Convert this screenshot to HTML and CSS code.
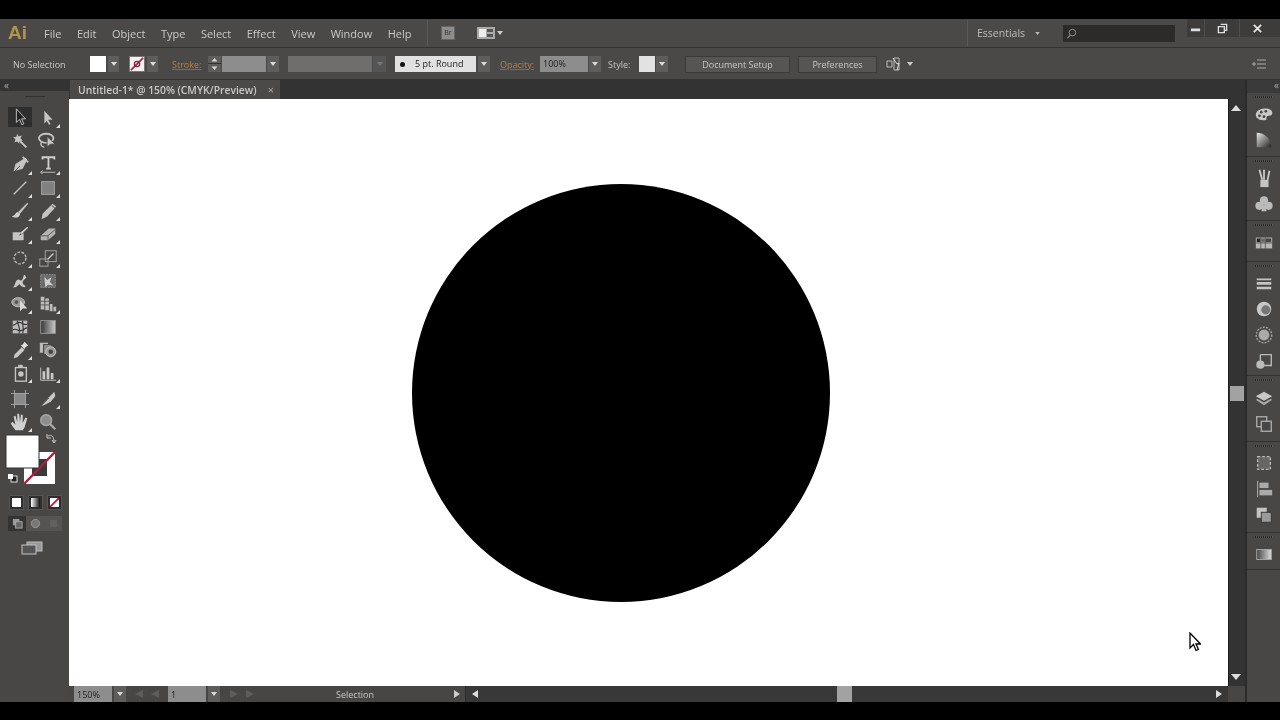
FILE: index.html
```html
<!DOCTYPE html>
<html lang="en">
<head>
<meta charset="utf-8">
<title>Adobe Illustrator</title>
<link rel="stylesheet" href="styles.css">
</head>
<body>
<div class="app">
  <header class="menubar">
    <div class="logo">Ai</div>
    <nav class="menu"><span>File</span><span>Edit</span><span>Object</span><span>Type</span><span>Select</span><span>Effect</span><span>View</span><span>Window</span><span>Help</span></nav>
    <div class="vsep"></div>
    <div class="br">Br</div>
    <svg class="arrange" viewBox="0 0 26 14"><rect x="0" y="1" width="18" height="12" fill="#aaa"/><rect x="2" y="3" width="7" height="8" fill="#eee"/><rect x="10" y="3" width="6" height="3" fill="#555"/><rect x="10" y="8" width="6" height="3" fill="#555"/><path d="M20 5h6l-3 4z" fill="#ccc"/></svg>
    <div class="menu-right">
      <div class="vsep"></div>
      <div class="workspace-name">Essentials</div>
      <svg class="tiny" viewBox="0 0 6 4"><path d="M0 0h6L3 4z" fill="#bbb"/></svg>
      <div class="search"><svg viewBox="0 0 12 12"><circle cx="7" cy="5" r="3.6" fill="none" stroke="#999" stroke-width="1"/><path d="M4.500 8 1.500 11" stroke="#999" stroke-width="1.200"/></svg></div>
      <div class="winbtns">
        <div class="winbtn min"><svg viewBox="0 0 12 12"><rect x="1" y="6" width="10" height="3" fill="#ddd"/></svg></div>
        <div class="winbtn"><svg viewBox="0 0 12 12"><path d="M4 1.500h6.500V8H8.500M1.500 4H8v6.500H1.500Z" fill="none" stroke="#ddd" stroke-width="1.500"/></svg></div>
        <div class="winbtn close"><svg viewBox="0 0 12 12"><path d="M2 2 10 10M10 2 2 10" stroke="#e4e4e4" stroke-width="2"/></svg></div>
      </div>
    </div>
  </header>

  <section class="controlbar">
    <div class="label no-sel">No Selection</div>
    <div class="swatch"></div><div class="dd"></div>
    <div class="swatch none m10"><svg viewBox="0 0 16 16"><path d="M1 15 15 1" stroke="#b0204a" stroke-width="2"/><circle cx="8" cy="8" r="3" fill="none" stroke="#8a2040" stroke-width="1.500"/></svg></div><div class="dd"></div>
    <div class="label link m14 w29">Stroke:</div>
    <svg class="spin m7" viewBox="0 0 13 16"><rect width="13" height="16" fill="#5e5d5b"/><path d="M0 7.500h13" stroke="#333"/><path d="M3.500 5.500 6.500 2l3 3.500zM3.500 10.500h6l-3 3.500z" fill="#d4d4d4"/></svg>
    <div class="field w44 m1"></div><div class="dd m1 w12"></div>
    <div class="field dim w84 m9"></div><div class="dd faded m1 w13"></div>
    <div class="field light w81 m9"><i class="dot"></i>5 pt. Round</div><div class="dd w12"></div>
    <div class="label link m10 w33">Opacity:</div>
    <div class="field w48 m7 txt">100%</div><div class="dd m1 w12"></div>
    <div class="label m7 w23">Style:</div>
    <div class="swatch soft m8"></div><div class="dd m1 w12"></div>
    <button class="btn w105 m17">Document Setup</button>
    <button class="btn w79 m8">Preferences</button>
    <svg class="ctl-ic" viewBox="0 0 27 14"><path d="M1 4h5v6H1zM8 1h5v12H8z" fill="none" stroke="#bbb"/><path d="M7 1l4 6 2-1-2 7" fill="none" stroke="#ddd"/><path d="M21 5h6l-3 4z" fill="#ccc"/></svg>
    <svg class="panel-menu" viewBox="0 0 14 10"><path d="M5 1h9M5 5h9M5 9h9M0 5h4M2 3v4" stroke="#aaa"/></svg>
  </section>

  <main class="workspace">
    <aside class="tools">
      <div class="collapse left">«</div>
      <div class="grip"></div>
      <div class="toolset first">
        <div class="tool active"><svg viewBox="0 0 22 22"><path d="M7 2v15l3.500-3.500 2.500 6 2.200-1-2.500-5.500H17Z" fill="#222" stroke="#c8c8c8"/></svg></div>
        <div class="tool more"><svg viewBox="0 0 22 22"><path d="M7 3v14l4-4 5 0Z" fill="#c4c4c4"/><path d="M10 13l3 5" stroke="#c4c4c4" stroke-width="2"/></svg></div>
        <div class="tool"><svg viewBox="0 0 22 22"><path d="M8 3l1.500 3L13 5l-1.500 3 2.500 2.500-3.500.5L10 14 8 11.500 5 12.500 6 9 3.500 7 7 6.500Z" fill="#c8c8c8"/><path d="M11 11l7 7" stroke="#c8c8c8" stroke-width="2"/></svg></div>
        <div class="tool"><svg viewBox="0 0 22 22"><ellipse cx="9" cy="8" rx="8" ry="5" fill="none" stroke="#c4c4c4" stroke-width="2"/><path d="M4 12c-2 3 0 5 3 6" fill="none" stroke="#c4c4c4" stroke-width="1.500"/><path d="M10 6v12l3.500-3.500H19Z" fill="#c8c8c8" stroke="#444"/></svg></div>
      </div>
      <div class="toolset">
        <div class="tool more"><svg viewBox="0 0 22 22"><path d="M17 3 19 5 14 15 7 17 4 18l2-8Z" fill="#c4c4c4"/><path d="M5 18l6-6" stroke="#444"/><path d="M14 2l6 6" stroke="#c4c4c4" stroke-width="2"/></svg></div>
        <div class="tool more"><svg viewBox="0 0 22 22"><path d="M5 5V2.500H18V5M11.500 3v12M9 15h5" fill="none" stroke="#d0d0d0" stroke-width="2"/><path d="M3 19h16M5 17l-2 2 2 2" fill="none" stroke="#c4c4c4"/></svg></div>
        <div class="tool more"><svg viewBox="0 0 22 22"><path d="M4 18 18 4" stroke="#ccc" stroke-width="1.500"/></svg></div>
        <div class="tool more"><svg viewBox="0 0 22 22"><rect x="4" y="4" width="14" height="14" fill="#808080" stroke="#a8a8a8"/></svg></div>
        <div class="tool more"><svg viewBox="0 0 22 22"><path d="M19 2 20 3 11 14 9 12Z" fill="#c4c4c4"/><path d="M9 12c-3 0-3 4-7 5 3 2 9 2 9-3Z" fill="#d0d0d0"/></svg></div>
        <div class="tool more"><svg viewBox="0 0 22 22"><path d="M16 3l4 3-10 11-6 3 1-6Z" fill="#c4c4c4"/><path d="M15 5l4 3" stroke="#444"/></svg></div>
        <div class="tool more"><svg viewBox="0 0 22 22"><path d="M3 9h9l-2 4 5-3v8H3Z" fill="#c4c4c4"/><path d="M19 3l1 1-7 7-2-1Z" fill="#d0d0d0"/></svg></div>
        <div class="tool more"><svg viewBox="0 0 22 22"><path d="M3 13 12 5h7v6L11 18H3Z" fill="#b4b4b4"/><path d="M3 13h8v5M11 13 19 6" fill="none" stroke="#555"/></svg></div>
      </div>
      <div class="toolset">
        <div class="tool more"><svg viewBox="0 0 22 22"><circle cx="11" cy="11" r="6.500" fill="none" stroke="#bbb" stroke-width="1.500" stroke-dasharray="3 1.500"/></svg></div>
        <div class="tool more"><svg viewBox="0 0 22 22"><rect x="8" y="3" width="12" height="12" fill="none" stroke="#aaa"/><rect x="2" y="12" width="9" height="8" fill="none" stroke="#aaa"/><path d="M11 12l6-6" stroke="#ccc" stroke-width="1.500"/></svg></div>
        <div class="tool more"><svg viewBox="0 0 22 22"><path d="M3 18c3-1 2-6 5-8s3 2 5 0 1-5 3-6l2 3c-1 2-4 3-4 6s3 2 3 4-5 0-6-2-3 4-8 3Z" fill="#c8c8c8"/></svg></div>
        <div class="tool"><svg viewBox="0 0 22 22"><rect x="3" y="4" width="16" height="14" fill="#6b6b6b" stroke="#999" stroke-dasharray="2 1"/><path d="M7 6l3 4 5-3-2 5 4 4-6-1-3 3Z" fill="#cfcfcf"/></svg></div>
        <div class="tool more"><svg viewBox="0 0 22 22"><ellipse cx="9" cy="9" rx="7" ry="5" fill="#999" stroke="#c4c4c4"/><circle cx="7" cy="9" r="2" fill="#555"/><path d="M11 7v12l3-3 5 0Z" fill="#d8d8d8"/></svg></div>
        <div class="tool more"><svg viewBox="0 0 22 22"><path d="M3 3h4v14H3zM8 5h4v13H8zM13 11h3v8h-3zM17 14h3v5h-3z" fill="#bdbdbd"/><path d="M3 8h13M3 12h9" stroke="#555"/></svg></div>
        <div class="tool"><svg viewBox="0 0 22 22"><rect x="3" y="4" width="16" height="14" fill="#bbb"/><path d="M3 9c4 0 4-4 8-3s4 3 8 2M3 14c5-2 5 2 9 1s4-3 7-3M8 4c0 4 4 6 2 14M14 4c-1 4 2 8 0 14" fill="none" stroke="#333" stroke-width="1.200"/></svg></div>
        <div class="tool"><svg viewBox="0 0 22 22"><defs><linearGradient id="grad" x1="0" x2="1"><stop offset="0" stop-color="#333"/><stop offset="1" stop-color="#ccc"/></linearGradient></defs><rect x="3" y="4" width="16" height="14" fill="url(#grad)" stroke="#999"/></svg></div>
        <div class="tool more"><svg viewBox="0 0 22 22"><path d="M4 20l1-4 8-8 3 3-8 8Z" fill="#c8c8c8"/><path d="M12 6l2-1 2-3 4 4-3 2-1 2Z" fill="#e0e0e0"/></svg></div>
        <div class="tool"><svg viewBox="0 0 22 22"><rect x="2" y="3" width="9" height="11" fill="#bbb"/><rect x="6" y="5" width="9" height="11" fill="#888" stroke="#444"/><circle cx="14" cy="13" r="5.500" fill="#999" stroke="#ccc"/><circle cx="14" cy="13" r="2.500" fill="#444"/></svg></div>
        <div class="tool more"><svg viewBox="0 0 22 22"><rect x="6" y="5" width="12" height="15" fill="none" stroke="#c4c4c4" stroke-width="1.500"/><rect x="9" y="2" width="5" height="3" fill="#c4c4c4"/><circle cx="12" cy="12" r="3" fill="#c4c4c4"/></svg></div>
        <div class="tool more"><svg viewBox="0 0 22 22"><path d="M3 5v14h17" fill="none" stroke="#c8c8c8"/><path d="M5 9h3v9H5zM9.500 5h3v13h-3zM14 11h3v7h-3z" fill="#c8c8c8"/></svg></div>
      </div>
      <div class="toolset last">
        <div class="tool"><svg viewBox="0 0 22 22"><rect x="5" y="5" width="12" height="12" fill="#8a8a8a"/><path d="M5 1v20M17 1v20M1 5h20M1 17h20" stroke="#a8a8a8"/></svg></div>
        <div class="tool more"><svg viewBox="0 0 22 22"><path d="M3 19 12 9l6-6 1 5-5 6-6 3Z" fill="#c8c8c8"/><path d="M3 19l9-9" stroke="#555"/></svg></div>
        <div class="tool more"><svg viewBox="0 0 22 22"><path d="M6 20c-2-3-5-6-5-8l2-1 3 3L4 5l2-1 2 7V2h2l1 9 1-8h2l0 9 3-6 2 1-3 10-2 3Z" fill="#d0d0d0"/></svg></div>
        <div class="tool"><svg viewBox="0 0 22 22"><circle cx="9" cy="9" r="6" fill="#8e8e8e" stroke="#aaa" stroke-width="1.500"/><path d="M13 13l6 6" stroke="#aaa" stroke-width="2.500"/></svg></div>
      </div>
      <svg class="fillstroke" viewBox="0 0 69 60">
        <rect x="24" y="23" width="31" height="32" fill="#fff"/>
        <rect x="32" y="30" width="15" height="17" fill="#3a3a3a"/>
        <path d="M24 55 55 23" stroke="#b01c3c" stroke-width="2.500"/>
        <rect x="6" y="6" width="33" height="33" fill="#fff" stroke="#333"/>
        <path d="M48 7c4-2 6 1 6 6M47 5v4h4M52 11l2 3 2-3" fill="none" stroke="#ccc"/>
        <rect x="11" y="47" width="6" height="6" fill="#222" stroke="#ddd"/><rect x="8" y="45" width="5" height="5" fill="#fff"/>
      </svg>
      <div class="modes">
        <div class="mode"><i class="m-white"></i></div>
        <div class="mode"><i class="m-grad"></i></div>
        <div class="mode"><svg viewBox="0 0 10 10"><rect width="10" height="10" fill="#fff"/><path d="M0 10 10 0" stroke="#b01c3c" stroke-width="2"/></svg></div>
      </div>
      <div class="draw">
        <div class="drawmode on"><svg viewBox="0 0 12 12"><rect x="1" y="1" width="7" height="7" fill="#999"/><rect x="4" y="4" width="7" height="7" fill="#666" stroke="#aaa"/></svg></div>
        <div class="drawmode"><svg viewBox="0 0 12 12"><circle cx="6" cy="6" r="4.500" fill="#777" stroke="#999"/></svg></div>
        <div class="drawmode"><svg viewBox="0 0 12 12"><rect x="2" y="2" width="8" height="8" fill="#606060"/></svg></div>
      </div>
      <svg class="screen" viewBox="0 0 22 14"><rect x="6" y="1" width="15" height="9" fill="#999" stroke="#bbb"/><rect x="1" y="4" width="14" height="9" fill="#555" stroke="#c4c4c4"/></svg>
    </aside>

    <div class="center">
      <div class="tabs">
        <div class="tab"><span>Untitled-1* @ 150% (CMYK/Preview)</span><span class="x">×</span></div>
      </div>
      <div class="docrow">
        <div class="canvas">
          <div class="circle"></div>
          <svg class="cursor" viewBox="0 0 12 20"><path d="M1 1v15l3.500-3.500L7 18.500l2.500-1L7 12h4.500Z" fill="#fff" stroke="#000" stroke-width="1.300"/></svg>
        </div>
        <div class="vscroll">
          <svg class="arr" viewBox="0 0 10 6"><path d="M5 0l5 6H0z" fill="#ddd"/></svg>
          <div class="thumb"></div>
          <svg class="arr" viewBox="0 0 10 6"><path d="M0 0h10L5 6z" fill="#ddd"/></svg>
        </div>
      </div>
      <footer class="status">
        <div class="field sb w38 txt">150%</div><div class="dd sbdd"></div>
        <div class="nav"><i class="nl"></i><i class="nl"></i></div>
        <div class="field sb w38 txt pg">1</div><div class="dd sbdd"></div>
        <div class="nav nr"><i class="nrr"></i><i class="nrr"></i></div>
        <div class="stat-text">Selection</div>
        <svg class="sarr" viewBox="0 0 6 8"><path d="M0 0l6 4-6 4z" fill="#ccc"/></svg>
        <div class="hscroll">
          <svg class="sarr" viewBox="0 0 6 8"><path d="M6 0 0 4l6 4z" fill="#ddd"/></svg>
          <div class="hthumb"></div>
          <svg class="sarr" viewBox="0 0 6 8"><path d="M0 0l6 4-6 4z" fill="#ddd"/></svg>
        </div>
        <div class="corner"></div>
      </footer>
    </div>

    <aside class="dock">
      <div class="collapse right">«</div>
      <div class="group g1"><div class="grip"></div>
        <div class="dic"><svg viewBox="0 0 22 22"><path d="M2 12c0-5 6-7 11-7s8 3 7 6-5 1-6 3 1 4-3 4-9-2-9-6Z" fill="#c8c8c8"/><circle cx="8" cy="9" r="1.500" fill="#444"/><circle cx="13" cy="8" r="1.500" fill="#444"/><circle cx="6" cy="13" r="1.500" fill="#444"/><circle cx="11" cy="14" r="1.500" fill="#444"/></svg></div>
        <div class="dic"><svg viewBox="0 0 22 22"><defs><linearGradient id="wedge" x1="0" y1="0" x2="1" y2="1"><stop offset="0" stop-color="#e8e8e8"/><stop offset="1" stop-color="#222"/></linearGradient></defs><path d="M3 3c9 0 16 7 16 16H3Z" fill="url(#wedge)"/></svg></div>
      </div>
      <div class="group g2"><div class="grip"></div>
        <div class="dic"><svg viewBox="0 0 22 22"><path d="M7 13h9v8H7Z" fill="#c4c4c4"/><path d="M6 2l3 11M11 2v11M17 3l-2 10" stroke="#c8c8c8" stroke-width="2"/></svg></div>
        <div class="dic"><svg viewBox="0 0 22 22"><circle cx="11" cy="7" r="4.500" fill="#bbb"/><circle cx="6" cy="13" r="4.500" fill="#bbb"/><circle cx="16" cy="13" r="4.500" fill="#bbb"/><path d="M11 10l-3 9h6Z" fill="#bbb"/></svg></div>
      </div>
      <div class="group g3"><div class="grip"></div>
        <div class="dic"><svg viewBox="0 0 22 22"><rect x="2" y="5" width="18" height="12" fill="#b8b8b8"/><path d="M3 6h4v4H3z" fill="#222"/><path d="M8 6h4v4H8z" fill="#666"/><path d="M13 6h6v4h-6z" fill="#444"/><path d="M2 11h18M7.500 5v12M12.500 5v12" stroke="#555"/></svg></div>
      </div>
      <div class="group g4"><div class="grip"></div>
        <div class="dic"><svg viewBox="0 0 22 22"><path d="M3 6h16v2H3zM3 10h16v3H3zM3 15h16v3H3z" fill="#c4c4c4"/></svg></div>
        <div class="dic"><svg viewBox="0 0 22 22"><circle cx="11" cy="11" r="8" fill="#c8c8c8"/><circle cx="13" cy="12" r="5" fill="#777"/></svg></div>
        <div class="dic"><svg viewBox="0 0 22 22"><circle cx="11" cy="11" r="8.500" fill="none" stroke="#aaa" stroke-width="1.500" stroke-dasharray="2 1.500"/><circle cx="11" cy="11" r="6" fill="#aaa"/></svg></div>
        <div class="dic"><svg viewBox="0 0 22 22"><path d="M7 4h12v12H11" fill="none" stroke="#bbb" stroke-width="1.500"/><path d="M7 4v7" stroke="#bbb" stroke-width="1.500"/><circle cx="7" cy="15" r="4.500" fill="#bbb"/></svg></div>
      </div>
      <div class="group g5"><div class="grip"></div>
        <div class="dic"><svg viewBox="0 0 22 22"><path d="M11 4 20 9 11 14 2 9Z" fill="#c8c8c8"/><path d="M4 12l7 4 7-4 2 1-9 6-9-6Z" fill="#aaa"/></svg></div>
        <div class="dic"><svg viewBox="0 0 22 22"><rect x="3" y="3" width="11" height="11" fill="none" stroke="#aaa" stroke-width="1.500"/><rect x="8" y="8" width="11" height="11" fill="#474747" stroke="#aaa" stroke-width="1.500"/></svg></div>
      </div>
      <div class="group g6"><div class="grip"></div>
        <div class="dic"><svg viewBox="0 0 22 22"><rect x="4" y="4" width="14" height="14" fill="#666" stroke="#bbb" stroke-width="1.500" stroke-dasharray="3 2"/></svg></div>
        <div class="dic"><svg viewBox="0 0 22 22"><path d="M4 2v18" stroke="#bbb"/><rect x="6" y="4" width="10" height="6" fill="#aaa"/><rect x="6" y="12" width="14" height="6" fill="#aaa"/></svg></div>
        <div class="dic"><svg viewBox="0 0 22 22"><rect x="3" y="3" width="11" height="11" fill="#c4c4c4"/><rect x="8" y="8" width="11" height="11" fill="#9a9a9a" stroke="#333"/></svg></div>
      </div>
      <div class="group g7"><div class="grip"></div>
        <div class="dic"><svg viewBox="0 0 22 22"><defs><linearGradient id="gr2" x1="0" x2="1"><stop offset="0" stop-color="#444"/><stop offset="1" stop-color="#ddd"/></linearGradient></defs><rect x="3" y="6" width="16" height="11" fill="url(#gr2)" stroke="#aaa"/></svg></div>
      </div>
    </aside>
  </main>
</div>
</body>
</html>
```

FILE: styles.css
```css
* { box-sizing: border-box; }
html, body { margin: 0; height: 100%; background: #000; overflow: hidden; }
body { padding: 19px 0 18px; font-family: "Open Sans", "Liberation Sans", sans-serif; color: #c8c8c8; }
svg { display: block; flex: none; }
.app { height: 683px; display: flex; flex-direction: column; background: #484745; filter: blur(.35px); }

/* menu bar */
.menubar { height: 29px; flex: none; display: flex; align-items: center; border-bottom: 1px solid #333; background: #4a4947; }
.logo { width: 44px; padding-left: 8px; font: bold 19px "Liberation Sans", sans-serif; color: #b3954a; }
.menu { display: flex; font-size: 11px; color: #c9c9c9; }
.menu span { margin-right: 15.500px; }
.vsep { width: 1px; height: 26px; background: #5a5a58; }
.br { width: 14px; height: 14px; margin-left: 13px; background: #8d8d8d; color: #333; font-size: 7px; line-height: 12px; text-align: center; border: 1px solid #666; }
.arrange { width: 26px; height: 14px; margin-left: 22px; }
.menu-right { margin-left: auto; display: flex; align-items: center; height: 100%; }
.workspace-name { margin-left: 9px; font-size: 10.500px; color: #bdbdbd; width: 58px; }
.tiny { width: 5px; height: 3px; }
.search { width: 112px; height: 17px; margin: 0 12px 0 23px; background: #2c2b2a; padding: 3px 0 0 3px; }
.search svg { width: 11px; height: 11px; }
.winbtns { display: flex; align-self: flex-start; height: 18px; width: 93px; background: #3d3c3b; padding-right: 5px; }
.winbtn { width: 35px; display: flex; align-items: center; justify-content: center; border-right: 1px solid #4e4e4e; }
.winbtn.min { width: 18px; }
.winbtn svg { width: 11px; height: 11px; }
.winbtn.close { flex: 1; border: 0; }

/* control bar */
.controlbar { height: 32px; flex: none; display: flex; align-items: center; padding-top: 1px; background: #4a4947; border-bottom: 1px solid #333; font-size: 9px; }
.label { color: #c4c4c4; white-space: nowrap; font-size: 9px; }
.no-sel { width: 90px; padding-left: 13px; color: #c8c8c8; }
.link { color: #b5813f; text-decoration: underline; text-decoration-color: #8a6a3a; }
.swatch { width: 16px; height: 16px; background: #fff; flex: none; }
.swatch.none { background: #f2f2f2; border: 1px solid #777; }
.swatch.none svg { width: 100%; height: 100%; }
.swatch.soft { background: #e2e2e2; }
.dd { width: 11px; height: 16px; margin-left: 2px; background: #5e5d5b; flex: none; display: flex; align-items: center; justify-content: center; }
.dd::after { content: ""; border: 3.500px solid transparent; border-top: 4px solid #dadada; border-bottom: 0; }
.dd.faded { background: #555; }
.dd.faded::after { border-top-color: #777; }
.field { height: 16px; background: #8d8d8d; flex: none; color: #222; font-size: 9px; line-height: 16px; }
.field.dim { background: #6f6e6c; }
.field.light { background: #e1e1e1; color: #222; display: flex; align-items: center; padding-left: 5px; }
.field.txt { padding-left: 3px; }
.dot { width: 5px; height: 5px; border-radius: 50%; background: #111; margin-right: 10px; }
.spin { width: 13px; height: 16px; }
.btn { height: 17px; flex: none; padding: 0; background: #565553; border: 1px solid #3a3a3a; color: #c6c6c6; font: 9px "Open Sans", sans-serif; }
.ctl-ic { width: 27px; height: 14px; margin-left: 9px; }
.panel-menu { width: 14px; height: 10px; margin-left: auto; margin-right: 14px; }
.m1 { margin-left: 1px; } .m7 { margin-left: 7px; } .m8 { margin-left: 8px; } .m9 { margin-left: 9px; }
.m10 { margin-left: 10px; } .m14 { margin-left: 14px; } .m17 { margin-left: 17px; }
.w12 { width: 12px; } .w13 { width: 13px; } .w23 { width: 23px; } .w29 { width: 29px; } .w33 { width: 33px; }
.w38 { width: 38px; } .w44 { width: 44px; } .w48 { width: 48px; } .w79 { width: 79px; } .w81 { width: 81px; } .w84 { width: 84px; } .w105 { width: 105px; }

/* workspace */
.workspace { flex: 1; display: flex; min-height: 0; }
.collapse { font-size: 10px; line-height: 10px; color: #aaa; }
.tools { width: 69px; flex: none; display: flex; flex-direction: column; background: #484745; }
.collapse.left { height: 11px; background: #333; padding-left: 4px; }
.tools > .grip { width: 20px; margin: 5px auto 0; height: 1px; background: #2f2f2f; }
.toolset { display: grid; grid-template-columns: 28px 28px; grid-auto-rows: 23px; padding-left: 6px; margin-top: 1px; }
.toolset.first { margin-top: 9px; }
.toolset.last { margin-top: 3px; }
.tool { position: relative; display: flex; align-items: center; justify-content: center; }
.tool svg { width: 20px; height: 20px; }
.tool.active { background: #2f2e2e; margin: 1px 2px 2px; }
.tool.more::after { content: ""; position: absolute; right: 2px; bottom: 1px; border: 2px solid transparent; border-right-color: #ddd; border-bottom-color: #ddd; }
.fillstroke { width: 69px; height: 60px; margin-top: -4px; }
.modes { display: flex; gap: 4px; margin: 6px 0 0 9px; }
.mode { width: 15px; height: 15px; background: #2e2e2e; border: 1px solid #555; padding: 2px; }
.mode i, .mode svg { display: block; width: 100%; height: 100%; }
.m-white { background: #fff; }
.m-grad { background: linear-gradient(90deg, #fff, #111); }
.draw { display: flex; margin: 6px 0 0 8px; width: 54px; height: 15px; background: #555452; }
.drawmode { flex: 1; display: flex; align-items: center; justify-content: center; }
.drawmode.on { background: #333; }
.drawmode svg { width: 11px; height: 11px; }
.screen { width: 22px; height: 14px; margin: 10px 0 0 21px; }

/* center */
.center { flex: 1; min-width: 0; display: flex; flex-direction: column; }
.tabs { height: 19px; flex: none; background: #333; padding-left: 1px; display: flex; }
.tab { width: 210px; background: #4b4a49; display: flex; align-items: center; justify-content: space-between; padding: 0 6px 0 8px; font-size: 10.350px; font-weight: 600; color: #c8c8c8; white-space: nowrap; }
.x { font-weight: 400; font-size: 11px; color: #aaa; }
.docrow { flex: 1; min-height: 0; display: flex; }
.canvas { flex: 1; background: #fff; position: relative; overflow: hidden; }
.circle { position: absolute; left: 343px; top: 85px; width: 418px; height: 418px; border-radius: 50%; background: #000; }
.cursor { position: absolute; left: 1120px; top: 533px; width: 12px; height: 20px; }
.vscroll { width: 17px; flex: none; background: #333; border-left: 1px solid #1c1c1c; display: flex; flex-direction: column; align-items: center; padding: 6px 2px 6px 0; }
.arr { width: 10px; height: 6px; }
.thumb { width: 14px; height: 15px; background: #a2a2a2; margin: 275px -2px auto 0; }
.status { height: 16px; flex: none; display: flex; align-items: center; background: #474644; padding-left: 5px; font-size: 9px; }
.field.sb { height: 16px; line-height: 17px; background: #8d8d8d; }
.sbdd { width: 12px; height: 16px; }
.nav { width: 40px; display: flex; gap: 8px; padding-left: 9px; }
.nav.nr { padding-left: 10px; }
.nl, .nrr { width: 8px; height: 8px; background: #5e5d5b; }
.nl { clip-path: polygon(100% 0, 0 50%, 100% 100%); }
.nrr { clip-path: polygon(0 0, 100% 50%, 0 100%); }
.pg { margin-left: 2px; }
.stat-text { margin-left: 76px; width: 118px; color: #c8c8c8; }
.sarr { width: 6px; height: 8px; }
.hscroll { flex: 1; height: 100%; margin-left: 5px; background: #383838; display: flex; align-items: center; padding: 0 6px; border-left: 1px solid #2b2b2b; justify-content: space-between; position: relative; }
.hthumb { position: absolute; left: 371px; top: 0; width: 15px; height: 16px; background: #a2a2a2; }
.corner { width: 17px; height: 100%; background: #474644; }

/* right dock */
.dock { width: 35px; flex: none; display: flex; flex-direction: column; background: #484745; border-left: 2px solid #2b2b2b; }
.collapse.right { height: 13px; background: #3a3a3a; text-align: right; padding-right: 1px; }
.group { display: flex; flex-direction: column; align-items: center; border-bottom: 1px solid #333; padding-top: 3px; }
.group .grip { width: 18px; height: 2px; margin-bottom: auto; background: repeating-linear-gradient(90deg, #222 0 1px, #5a5a5a 1px 2px); }
.g1 { height: 64px; padding-bottom: 3px; }
.g2 { height: 64px; padding-bottom: 3px; }
.g3 { height: 41px; padding-bottom: 5px; }
.g4 { height: 114px; padding-bottom: 1px; }
.g5 { height: 66px; padding-bottom: 4px; }
.g6 { height: 91px; padding-bottom: 4px; }
.g7 { height: 37px; padding-bottom: 2px; }
.dic { height: 26px; display: flex; align-items: center; justify-content: center; }
.dic svg { width: 20px; height: 20px; }
```
